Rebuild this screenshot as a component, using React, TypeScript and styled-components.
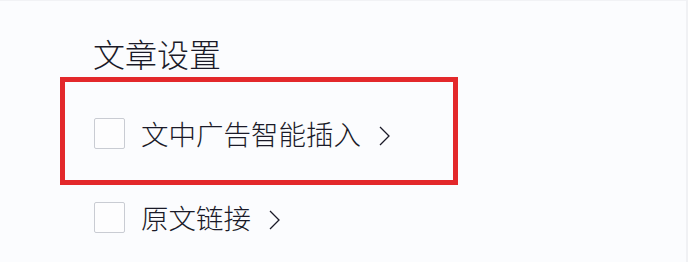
import React from "react";
import styled, { createGlobalStyle } from "styled-components";

const GlobalStyle = createGlobalStyle`
    html, body {
        margin: 0;
        padding: 0;
        background: #fbfcfe;
    }
    body {
        font-family: "Noto Sans CJK SC", "Noto Sans", sans-serif;
    }
`;

const Page = styled.div`
    box-sizing: border-box;
    width: 688px;
    height: 262px;
    padding-top: 32px;
    background: #fbfcfe;
    border-top: 1px solid #f1f2f5;
    border-right: 2px solid #f0f1f4;
    overflow: hidden;
`;

const Title = styled.div`
    margin-left: 93px;
    font-size: 32px;
    font-weight: 300;
    line-height: 40px;
    color: #1a1a28;
`;

const Highlight = styled.div`
    box-sizing: border-box;
    margin-top: 4px;
    margin-left: 60px;
    width: 398px;
    height: 108px;
    border: 5px solid #e3282b;
    padding: 36px 0 0 29px;
`;

const Row = styled.div<{ $indent?: number }>`
    display: flex;
    align-items: center;
    height: 31px;
    margin-left: ${({ $indent }) => $indent ?? 0}px;
`;

const Plain = styled.div`
    margin-top: 17px;
`;

const Checkbox = styled.span`
    box-sizing: border-box;
    width: 31px;
    height: 31px;
    border: 1px solid #c9ccd3;
    border-radius: 2px;
    background: #fdfdfe;
    flex-shrink: 0;
`;

const Label = styled.span`
    margin-left: 16px;
    font-size: 27.5px;
    font-weight: 300;
    line-height: 31px;
    color: #1a1a28;
`;

const Chevron = styled.svg`
    margin-left: 18px;
    margin-top: 4px;
    width: 11px;
    height: 20px;
`;

const Arrow = () => (
    <Chevron viewBox="0 0 11 20">
        <polyline points="1,1 10,10 1,19" fill="none" stroke="#1a1a28" strokeWidth="1.3" />
    </Chevron>
);

export default function App() {
    return (
        <>
            <GlobalStyle />
            <Page>
                <Title>文章设置</Title>
                <Highlight>
                    <Row>
                        <Checkbox />
                        <Label>文中广告智能插入</Label>
                        <Arrow />
                    </Row>
                </Highlight>
                <Plain>
                    <Row $indent={94}>
                        <Checkbox />
                        <Label>原文链接</Label>
                        <Arrow />
                    </Row>
                </Plain>
            </Page>
        </>
    );
}
